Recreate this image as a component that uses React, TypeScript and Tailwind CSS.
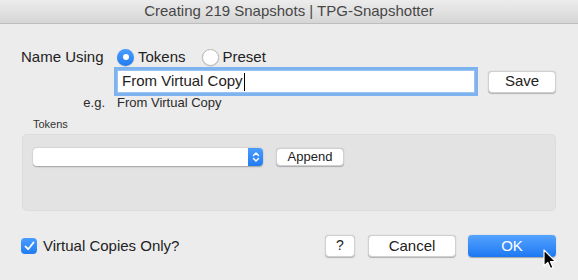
import React from "react";

const font = { fontFamily: '"Liberation Sans", Arial, sans-serif' };

function Radio({ checked }: { checked?: boolean }) {
  if (checked) {
    return (
      <span className="flex h-[17px] w-[17px] shrink-0 items-center justify-center rounded-full bg-gradient-to-b from-[#4a9cff] to-[#1f7cf2] shadow-[0_0.5px_1px_rgba(0,0,0,0.3)]">
        <span className="h-[6px] w-[6px] rounded-full bg-white" />
      </span>
    );
  }
  return (
    <span className="block h-[17px] w-[17px] shrink-0 rounded-full border border-[#b9b9b9] bg-white shadow-[0_0.5px_1px_rgba(0,0,0,0.15)]" />
  );
}

function Button({ children, className = "" }: { children: React.ReactNode; className?: string }) {
  return (
    <button
      className={
        "flex items-center justify-center rounded-[4px] border border-[#d0d0d0] bg-white text-[#222] shadow-[0_0.5px_1px_rgba(0,0,0,0.25)] " +
        className
      }
    >
      {children}
    </button>
  );
}

export default function App() {
  return (
    <div style={font} className="relative flex h-[280px] w-[578px] flex-col overflow-hidden bg-[#ececec] text-[#222]">
      {/* title bar */}
      <div className="flex h-[24px] shrink-0 items-center justify-center rounded-t-[5px] border-b border-[#bdbdbd] bg-gradient-to-b from-[#ececec] to-[#d6d6d6] text-[15px] text-[#474747]">
        Creating 219 Snapshots | TPG-Snapshotter
      </div>

      <div className="flex flex-col pl-[21px] pr-[22px] pt-[24px]">
        {/* name using */}
        <div className="flex h-[18px] items-center text-[15px]">
          <span className="w-[96px]">Name Using</span>
          <Radio checked />
          <span className="ml-[4px]">Tokens</span>
          <span className="ml-[16px] flex">
            <Radio />
          </span>
          <span className="ml-[4px]">Preset</span>
        </div>

        <div className="mt-[4px] flex items-center pl-[96px]">
          <div className="flex h-[23px] w-[358px] items-center border border-[#9cc3ee] bg-white pl-[4px] text-[15px] shadow-[0_0_0_3px_#7db4ef]">
            From Virtual Copy
            <span className="ml-[1px] h-[18px] w-px bg-black" />
          </div>
          <Button className="ml-[13px] h-[22px] w-[68px] text-[15px]">Save</Button>
        </div>

        <div className="mt-[3px] flex h-[14px] items-center text-[13px] text-[#2a2a2a]">
          <span className="w-[84px] text-right">e.g.</span>
          <span className="ml-[12px]">From Virtual Copy</span>
        </div>

        {/* tokens group */}
        <div className="mt-[6px] pl-[12px] text-[11px] text-[#333]">Tokens</div>
        <div className="mt-[1px] ml-px flex h-[77px] items-start rounded-[5px] border border-[#dcdcdc] bg-[#e3e3e3] pl-[10px] pt-[13px]">
          <div className="flex h-[18px] w-[230px] items-center justify-end rounded-[4px] bg-white shadow-[0_0.5px_1.5px_rgba(0,0,0,0.3)]">
            <span className="flex h-[18px] w-[15px] items-center justify-center rounded-r-[4px] bg-gradient-to-b from-[#4a9cff] to-[#1f7cf2]">
              <svg width="8" height="12" viewBox="0 0 8 12" fill="none" stroke="white" strokeWidth="1.5" strokeLinecap="round" strokeLinejoin="round">
                <path d="M1.5 4.5 L4 2 L6.5 4.5" />
                <path d="M1.5 7.5 L4 10 L6.5 7.5" />
              </svg>
            </span>
          </div>
          <Button className="ml-[13px] h-[18px] w-[68px] text-[13px]">Append</Button>
        </div>

        {/* footer */}
        <div className="mt-[24px] flex items-center">
          <span className="flex h-[16px] w-[16px] items-center justify-center rounded-[4px] bg-gradient-to-b from-[#4a9cff] to-[#1f7cf2]">
            <svg width="11" height="10" viewBox="0 0 11 10" fill="none" stroke="white" strokeWidth="1.8" strokeLinecap="round" strokeLinejoin="round">
              <path d="M1.5 5.5 L4.2 8.2 L9.5 1.5" />
            </svg>
          </span>
          <span className="ml-[6px] text-[15px]">Virtual Copies Only?</span>
          <div className="ml-auto flex items-center">
            <Button className="h-[22px] w-[30px] text-[14px]">?</Button>
            <Button className="ml-[13px] h-[22px] w-[88px] text-[15px]">Cancel</Button>
            <button className="ml-[12px] flex h-[22px] w-[88px] items-center justify-center rounded-[4px] bg-gradient-to-b from-[#54a3ff] to-[#1b78f2] text-[15px] text-white shadow-[0_0.5px_1px_rgba(0,0,0,0.3)]">
              OK
            </button>
          </div>
        </div>
      </div>

      {/* mouse pointer */}
      <svg className="absolute left-[543px] top-[249px]" width="14" height="22" viewBox="0 0 14 22">
        <path d="M1 1 L1 17 L4.8 13.5 L7.4 19.6 L10 18.5 L7.4 12.6 L12.5 12.6 Z" fill="black" stroke="white" strokeWidth="1.2" strokeLinejoin="round" />
      </svg>
    </div>
  );
}
